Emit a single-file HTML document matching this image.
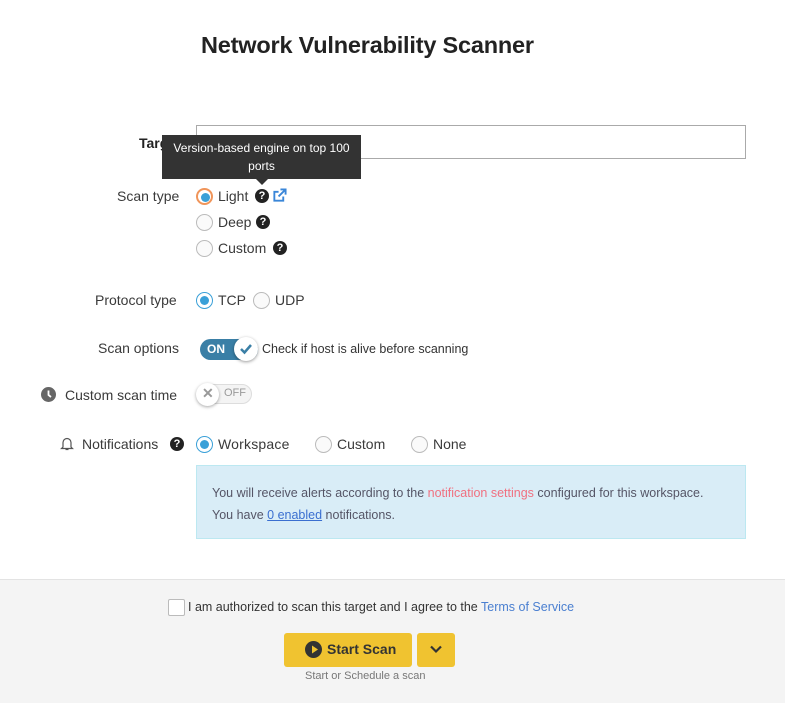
<!DOCTYPE html>
<html><head><meta charset="utf-8"><style>
*{margin:0;padding:0;box-sizing:border-box}
body{width:785px;height:703px;background:#fff;font-family:"Liberation Sans",sans-serif;color:#333;position:relative;overflow:hidden}
.a{position:absolute;white-space:nowrap}
.lbl{font-size:14px;color:#3a3a3a;line-height:16px}
.r{position:absolute;width:17px;height:17px;border-radius:50%;border:1px solid #bbb;background:#fafafa}
.r.on{border:1px solid #3aa0d8;background:#fff}
.r.on::after{content:"";position:absolute;left:3px;top:3px;width:9px;height:9px;border-radius:50%;background:#3aa0d8}
.q{position:absolute;width:14px;height:14px;border-radius:50%;background:#222;color:#fff;font-size:11px;font-weight:bold;text-align:center;line-height:14px}
</style></head><body>
<div class="a" style="left:201px;top:32px;font-size:23.5px;font-weight:bold;color:#222;letter-spacing:-0.2px">Network Vulnerability Scanner</div>
<div class="a" style="left:196px;top:125px;width:550px;height:34px;border:1px solid #aaa"></div>
<div class="a lbl" style="left:139px;top:135px;font-weight:bold;color:#222">Target</div>
<div class="a" style="left:162px;top:135px;width:199px;height:44px;background:#333;color:#fff;font-size:12px;text-align:center;line-height:18px;padding-top:4px;white-space:normal">Version-based engine on top 100 ports</div>
<div class="a" style="left:256px;top:179px;border-left:6px solid transparent;border-right:6px solid transparent;border-top:6px solid #333"></div>

<div class="a lbl" style="left:117px;top:188px">Scan type</div>
<div class="r on" style="left:196px;top:188px;border:2px solid #f0955a"></div>
<div class="a lbl" style="left:218px;top:188px">Light</div>
<div class="q" style="left:255px;top:189px">?</div>
<svg class="a" style="left:272px;top:188px" width="15" height="15" viewBox="0 0 16 16"><path d="M12 9v4.5H2.5V4H7" fill="none" stroke="#3a86d8" stroke-width="2"/><path d="M9 1.5h5.5V7M14.5 1.5L7 9" fill="none" stroke="#3a86d8" stroke-width="2"/></svg>
<div class="r" style="left:196px;top:214px"></div>
<div class="a lbl" style="left:218px;top:214px">Deep</div>
<div class="q" style="left:256px;top:215px">?</div>
<div class="r" style="left:196px;top:240px"></div>
<div class="a lbl" style="left:218px;top:240px">Custom</div>
<div class="q" style="left:273px;top:241px">?</div>

<div class="a lbl" style="left:95px;top:292px">Protocol type</div>
<div class="r on" style="left:196px;top:292px"></div>
<div class="a lbl" style="left:218px;top:292px">TCP</div>
<div class="r" style="left:253px;top:292px"></div>
<div class="a lbl" style="left:275px;top:292px">UDP</div>

<div class="a lbl" style="left:98px;top:340px">Scan options</div>
<div class="a" style="left:200px;top:339px;width:58px;height:21px;border-radius:11px;background:#3a7fa6"></div>
<div class="a" style="left:207px;top:342px;color:#fff;font-size:12px;font-weight:bold">ON</div>
<div class="a" style="left:234px;top:337px;width:24px;height:24px;border-radius:50%;background:#fff;box-shadow:0 1px 3px rgba(0,0,0,.4)"></div>
<svg class="a" style="left:239px;top:343px" width="14" height="12" viewBox="0 0 14 12"><path d="M2 6l3.5 3.5L12 2" fill="none" stroke="#3a7fa6" stroke-width="2.5"/></svg>
<div class="a" style="left:262px;top:342px;font-size:12.5px;color:#333">Check if host is alive before scanning</div>

<div class="a" style="left:41px;top:387px;width:15px;height:15px;border-radius:50%;background:#666"></div>
<svg class="a" style="left:41px;top:387px" width="15" height="15"><path d="M7.5 3.5v4.5l2.5 2" fill="none" stroke="#fff" stroke-width="1.8"/></svg>
<div class="a lbl" style="left:65px;top:387px">Custom scan time</div>
<div class="a" style="left:197px;top:384px;width:55px;height:20px;border-radius:10px;background:#f4f4f4;border:1px solid #ddd"></div>
<div class="a" style="left:196px;top:383px;width:23px;height:23px;border-radius:50%;background:#fff;box-shadow:0 1px 3px rgba(0,0,0,.35)"></div>
<div class="a" style="left:202px;top:385px;font-size:14px;font-weight:bold;color:#999">✕</div>
<div class="a" style="left:224px;top:387px;font-size:11px;color:#999">OFF</div>

<svg class="a" style="left:60px;top:436px" width="14" height="15" viewBox="0 0 14 15"><path d="M3 11V6.5a4 4 0 0 1 8 0V11l1.5 1.5h-11z" fill="none" stroke="#555" stroke-width="1.2"/><path d="M5.5 13.5h3" stroke="#555" stroke-width="1.2"/></svg>
<div class="a lbl" style="left:82px;top:436px">Notifications</div>
<div class="q" style="left:170px;top:437px">?</div>
<div class="r on" style="left:196px;top:436px"></div>
<div class="a lbl" style="left:218px;top:436px;letter-spacing:0.2px">Workspace</div>
<div class="r" style="left:315px;top:436px"></div>
<div class="a lbl" style="left:337px;top:436px">Custom</div>
<div class="r" style="left:411px;top:436px"></div>
<div class="a lbl" style="left:433px;top:436px">None</div>

<div class="a" style="left:196px;top:465px;width:550px;height:74px;background:#d9edf7;border:1px solid #bce8f1"></div>
<div class="a" style="left:212px;top:482px;font-size:12.5px;color:#556;line-height:22px">You will receive alerts according to the <span style="color:#f07080">notification settings</span> configured for this workspace.<br>You have <span style="color:#3a6fd0;text-decoration:underline">0 enabled</span> notifications.</div>

<div class="a" style="left:0;top:579px;width:785px;height:124px;background:#f4f4f4;border-top:1px solid #e3e3e3"></div>
<div class="a" style="left:168px;top:599px;width:17px;height:17px;border:1px solid #bbb;background:#fff;border-radius:2px"></div>
<div class="a" style="left:188px;top:600px;font-size:12.5px;color:#333">I am authorized to scan this target and I agree to the <span style="color:#4a7fd0">Terms of Service</span></div>
<div class="a" style="left:284px;top:633px;width:128px;height:34px;background:#f0c330;border-radius:3px"></div>
<div class="a" style="left:305px;top:641px;width:17px;height:17px;border-radius:50%;background:#333"></div>
<svg class="a" style="left:305px;top:641px" width="17" height="17"><path d="M7 4.5v8l6-4z" fill="#f0c330"/></svg>
<div class="a" style="left:327px;top:641px;font-size:14px;font-weight:bold;color:#333">Start Scan</div>
<div class="a" style="left:417px;top:633px;width:38px;height:34px;background:#f0c330;border-radius:3px"></div>
<svg class="a" style="left:429px;top:644px" width="14" height="10"><path d="M2 2.5l5 5 5-5" fill="none" stroke="#333" stroke-width="2.2"/></svg>
<div class="a" style="left:305px;top:670px;font-size:11px;color:#777">Start or Schedule a scan</div>
</body></html>
